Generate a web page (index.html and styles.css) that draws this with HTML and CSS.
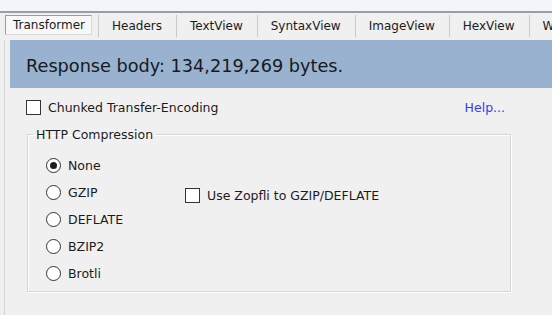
FILE: index.html
```html
<!DOCTYPE html>
<html>
<head>
<meta charset="utf-8">
<link rel="stylesheet" href="styles.css">
</head>
<body>
<div class="topstrip"></div>
<div class="tabs">
  <div class="tab active">Transformer</div>
  <div class="tab">Headers</div>
  <div class="tab">TextView</div>
  <div class="tab">SyntaxView</div>
  <div class="tab">ImageView</div>
  <div class="tab">HexView</div>
  <div class="tab">WebView</div>
</div>
<div class="panel">
  <div class="banner">Response body: 134,219,269 bytes.</div>
  <div class="row1">
    <label class="check"><span class="box"></span>Chunked Transfer-Encoding</label>
    <a class="help">Help...</a>
  </div>
  <fieldset class="group">
    <legend>HTTP Compression</legend>
    <div class="grid">
      <label class="opt"><span class="radio on"></span>None</label>
      <span></span>
      <label class="opt"><span class="radio"></span>GZIP</label>
      <label class="check zopfli"><span class="box"></span>Use Zopfli to GZIP/DEFLATE</label>
      <label class="opt"><span class="radio"></span>DEFLATE</label>
      <span></span>
      <label class="opt"><span class="radio"></span>BZIP2</label>
      <span></span>
      <label class="opt"><span class="radio"></span>Brotli</label>
      <span></span>
    </div>
  </fieldset>
</div>
</body>
</html>
```
FILE: styles.css
```css
html, body {
  margin: 0;
  padding: 0;
}
body {
  width: 552px;
  height: 315px;
  overflow: hidden;
  background: #f0f0f0;
  font-family: "DejaVu Sans", "Noto Sans", sans-serif;
  color: #1b1b1b;
}
.topstrip {
  height: 11px;
  background: #f2f6fb;
  border-bottom: 2px solid #9a9ea4;
}
.tabs {
  display: flex;
  height: 24px;
  font-size: 12px;
  white-space: nowrap;
  overflow: hidden;
}
.tab {
  display: flex;
  align-items: center;
  margin-top: 2px;
  padding: 0 14px 0 13px;
  border-left: 1px solid #c9c9c9;
  flex-shrink: 0;
}
.tab.active {
  margin: 2px 6px 2px 5px;
  padding: 0 6px 0 7px;
  border: 1px solid;
  border-color: #9c9c9c #d9d9d9 #d9d9d9 #9c9c9c;
  background: #f8f8f8;
}
.panel {
  margin-left: 4px;
  border-left: 1px solid #d6d6d6;
  height: 278px;
  font-size: 12.5px;
}
.banner {
  margin: 3px 0 0 5px;
  height: 48px;
  box-sizing: border-box;
  padding: 4px 0 0 16px;
  background: #98b2cf;
  color: #161a20;
  font-size: 17.7px;
  display: flex;
  align-items: center;
}
.row1 {
  display: flex;
  justify-content: space-between;
  align-items: center;
  margin-top: 12px;
  padding: 0 47px 0 21px;
  height: 15px;
}
.check, .opt {
  display: flex;
  align-items: center;
  gap: 7px;
}
.box {
  width: 15px;
  height: 15px;
  box-sizing: border-box;
  border: 1px solid #333;
  background: #fff;
}
.help {
  color: #3a3af2;
}
.group {
  margin: 12px 41px 0 22px;
  padding: 0;
  border: 1px solid #d7d7d7;
  box-shadow: 1px 1px 0 #fff, inset 1px 1px 0 #fff;
  min-width: 0;
}
.group legend {
  margin-left: 5px;
  padding: 0 3px;
  line-height: 15px;
}
.grid {
  display: grid;
  grid-template-columns: 139px 1fr;
  grid-auto-rows: 27px;
  padding: 10px 0 4px 18px;
  align-items: center;
}
.radio {
  width: 15px;
  height: 15px;
  box-sizing: border-box;
  border: 1px solid #333;
  border-radius: 50%;
  background: #fff;
  display: flex;
  align-items: center;
  justify-content: center;
}
.radio.on::after {
  content: "";
  width: 7px;
  height: 7px;
  border-radius: 50%;
  background: #1e1e1e;
}
.zopfli {
  position: relative;
  top: 3px;
}
```
